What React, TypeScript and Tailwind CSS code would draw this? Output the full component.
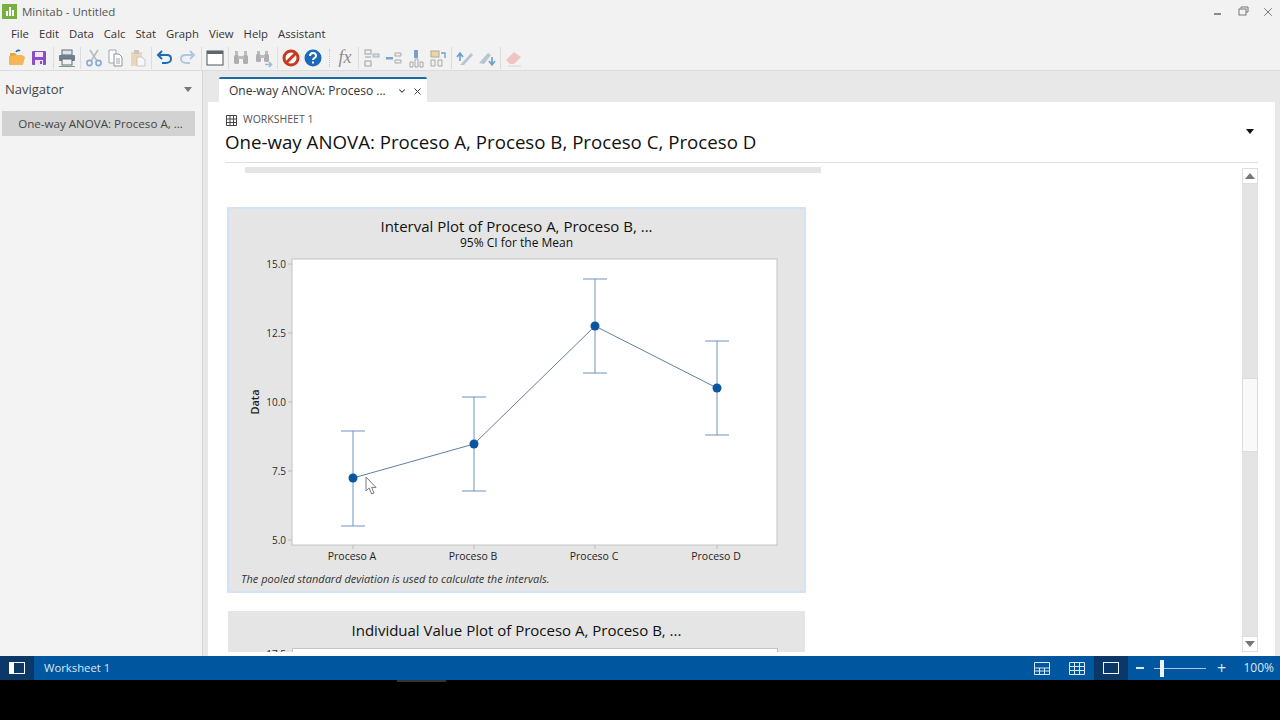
import { ChevronDown, X } from "lucide-react";

const sans = "font-['Open_Sans','Noto_Sans',sans-serif]";

const Sep = ({ tight = false }: { tight?: boolean }) => (
  <div className={`w-px h-[22px] bg-[#dcdcdc] ${tight ? "mx-[1.5px]" : "mx-[2px]"}`} />
);

const Slot = ({ children, className = "" }: { children: React.ReactNode; className?: string }) => (
  <div className={`w-[22px] h-[22px] flex items-center justify-center ${className}`}>
    <svg width="20" height="20" viewBox="0 0 20 20" fill="none">{children}</svg>
  </div>
);

const menus = ["File", "Edit", "Data", "Calc", "Stat", "Graph", "View", "Help", "Assistant"];

const Toolbar = () => (
  <div className="h-[26px] flex items-center pl-[6px]">
    <Slot>
      <path d="M3 5h5l2 2h5v2H3z" fill="#e8a33d" />
      <path d="M2 17V8h4l1-1h8l3 2-2 8z" fill="#f3b755" />
      <path d="M9 4c1-2 3-2 4-1" stroke="#1f6fb5" strokeWidth="1.6" />
    </Slot>
    <Slot>
      <rect x="3" y="3" width="14" height="14" rx="1" fill="#8a4fc0" />
      <rect x="6" y="4" width="8" height="5" fill="#efe7f7" />
      <rect x="6" y="12" width="8" height="5" fill="#efe7f7" />
      <rect x="11" y="13" width="2" height="3" fill="#8a4fc0" />
    </Slot>
    <div className="w-px" />
    <Sep />
    <Slot>
      <rect x="5" y="2" width="10" height="5" fill="#dfe5ea" stroke="#5d6d7a" />
      <rect x="2" y="7" width="16" height="6" rx="1" fill="#6d8090" />
      <rect x="5" y="11" width="10" height="6" fill="#f2f2f2" stroke="#5d6d7a" />
      <path d="M2 18.5h16" stroke="#7c9a8c" />
    </Slot>
    <Sep />
    <Slot className="opacity-60">
      <path d="M6 2l7 11M14 2L7 13" stroke="#8a98a6" strokeWidth="1.5" />
      <circle cx="5.5" cy="15" r="2.6" stroke="#3f7fc0" strokeWidth="1.6" />
      <circle cx="14.5" cy="15" r="2.6" stroke="#3f7fc0" strokeWidth="1.6" />
    </Slot>
    <Slot className="opacity-70">
      <path d="M3 2h7v13H3z" fill="#fff" stroke="#7c8a96" />
      <path d="M8 6h5l3 3v9H8z" fill="#fff" stroke="#66727d" />
      <path d="M10 11h4M10 13h4M10 15h4" stroke="#7c8a96" />
    </Slot>
    <Slot className="opacity-50">
      <rect x="3" y="4" width="11" height="14" fill="#e3bd7e" />
      <rect x="6" y="2" width="5" height="4" fill="#9a9a9a" />
      <path d="M9 9h5l3 3v6H9z" fill="#fff" stroke="#9a9a9a" />
    </Slot>
    <Sep />
    <Slot>
      <path d="M7 3L3 7l4 4" stroke="#1b6cb8" strokeWidth="2" />
      <path d="M3 7h9c3 0 4 2 4 4s-2 4-5 4H7" stroke="#1b6cb8" strokeWidth="2" />
    </Slot>
    <Slot className="opacity-50">
      <path d="M13 3l4 4-4 4" stroke="#6a9fd0" strokeWidth="2" />
      <path d="M17 7H8c-3 0-4 2-4 4s2 4 5 4h4" stroke="#6a9fd0" strokeWidth="2" />
    </Slot>
    <div className="w-px" />
    <Sep />
    <Slot>
      <rect x="2" y="3" width="16" height="14" fill="#fff" stroke="#4d5661" />
      <rect x="2" y="3" width="16" height="3" fill="#5c6672" />
    </Slot>
    <Sep tight />
    <Slot className="opacity-50">
      <rect x="3" y="7" width="5" height="9" rx="1.500" fill="#6c6c6c" />
      <rect x="12" y="7" width="5" height="9" rx="1.500" fill="#6c6c6c" />
      <rect x="7" y="8" width="6" height="3" fill="#8a8a8a" />
      <rect x="4" y="3" width="3" height="4" fill="#8a8a8a" />
      <rect x="13" y="3" width="3" height="4" fill="#8a8a8a" />
    </Slot>
    <div className="w-px" />
    <Slot className="opacity-50">
      <rect x="2" y="6" width="5" height="8" rx="1.500" fill="#6c6c6c" />
      <rect x="10" y="6" width="5" height="8" rx="1.500" fill="#6c6c6c" />
      <rect x="6" y="7" width="5" height="3" fill="#8a8a8a" />
      <rect x="3" y="3" width="3" height="3" fill="#8a8a8a" />
      <rect x="11" y="3" width="3" height="3" fill="#8a8a8a" />
      <path d="M11 16.500h6M15 14l2.500 2.500-2.500 2.500" stroke="#3f86c9" strokeWidth="1.6" />
    </Slot>
    <Sep />
    <Slot>
      <circle cx="10" cy="10" r="7" stroke="#c8391f" strokeWidth="3" fill="#fff" />
      <path d="M5.5 14.5l9-9" stroke="#c8391f" strokeWidth="3" />
    </Slot>
    <Slot>
      <circle cx="10" cy="10" r="8.5" fill="#1c69b8" />
      <path d="M7 8c0-4 6-4 6 0 0 2-3 2-3 4" stroke="#fff" strokeWidth="2" />
      <rect x="9" y="13.5" width="2" height="2" fill="#fff" />
    </Slot>
    <div className="w-[10px] flex justify-center">
      <div className="h-[18px] border-l border-dotted border-[#c4c4c4]" />
    </div>
    <div className="w-[22px] h-[22px] flex items-center justify-center text-[#8d8d8d] italic text-[18px] font-['Liberation_Serif',serif]">
      fx
    </div>
    <Sep />
    <Slot className="opacity-60">
      <rect x="3" y="2" width="6" height="4" stroke="#6d6d6d" />
      <rect x="3" y="13" width="6" height="5" stroke="#6d6d6d" />
      <path d="M3 9h6" stroke="#6d6d6d" />
      <rect x="11" y="6" width="6" height="3" fill="#b9cfe3" stroke="#7b8e9f" />
    </Slot>
    <Slot className="opacity-70">
      <rect x="2" y="9" width="7" height="2.5" fill="#3f86c9" />
      <path d="M11 5h6v3h-6zM11 12h6v3h-6z" stroke="#8a8a8a" />
    </Slot>
    <Slot className="opacity-70">
      <rect x="8" y="2" width="4" height="8" fill="#3f7fc0" />
      <path d="M4 14h3v5H4zM9 11h3v8H9zM14 14h3v5h-3z" stroke="#8a8a8a" />
    </Slot>
    <Slot className="opacity-70">
      <rect x="3" y="3" width="8" height="6" fill="#e6c98a" stroke="#9a8a66" />
      <path d="M3 12h4v6H3zM10 12h4v6h-4z" stroke="#8a8a8a" />
      <path d="M13 5h4v5" stroke="#3f7fc0" strokeWidth="1.4" />
    </Slot>
    <Sep />
    <Slot className="opacity-70">
      <path d="M6 16l10-11 2 2-9 10H5z" fill="#9fb2c4" />
      <path d="M2 9l3-4 3 4M5 5v8" stroke="#2f7cc0" strokeWidth="1.6" />
    </Slot>
    <Slot className="opacity-70">
      <path d="M2 15l9-10 3 2-7 9z" fill="#9fb2c4" />
      <path d="M12 13l3 4 3-4M15 17V9" stroke="#2f7cc0" strokeWidth="1.6" />
    </Slot>
    <Sep />
    <Slot className="opacity-60">
      <path d="M2 12l8-8 7 5-7 7H6z" fill="#f0a7a7" />
      <path d="M4 18h13" stroke="#c9c9c9" />
    </Slot>
  </div>
);

const IntervalPlot = () => {
  const points = [
    { x: 353, y: 478, top: 431, bottom: 526, label: "Proceso A" },
    { x: 474, y: 444, top: 397, bottom: 491, label: "Proceso B" },
    { x: 595, y: 326, top: 279, bottom: 373, label: "Proceso C" },
    { x: 717, y: 388, top: 341, bottom: 435, label: "Proceso D" },
  ];
  const ticks = [
    { y: 264, label: "15.0" },
    { y: 333, label: "12.5" },
    { y: 402, label: "10.0" },
    { y: 471, label: "7.5" },
    { y: 540, label: "5.0" },
  ];
  return (
    <svg viewBox="229 251 575 318" width="575" height="318" className="block">
      <rect x="292" y="259" width="485" height="286" fill="#fff" stroke="#c4c4c4" />
      {ticks.map((t) => (
        <g key={t.label}>
          <line x1="288" x2="292" y1={t.y} y2={t.y} stroke="#bdbdbd" />
          <text x="286" y={t.y + 4} textAnchor="end" fontSize="10" fill="#2b2b2b" fontFamily="Open Sans">
            {t.label}
          </text>
        </g>
      ))}
      <text
        transform="translate(259 402) rotate(-90)"
        textAnchor="middle"
        fontSize="11"
        fill="#1f1f1f"
        fontFamily="Open Sans"
        fontWeight="600"
      >
        Data
      </text>
      {points.map((p) => (
        <g key={p.label}>
          <line x1={p.x} x2={p.x} y1="545" y2="549" stroke="#bdbdbd" />
          <line x1={p.x} x2={p.x} y1={p.top} y2={p.bottom} stroke="#6f93c2" />
          <line x1={p.x - 12} x2={p.x + 12} y1={p.top} y2={p.top} stroke="#6f93c2" />
          <line x1={p.x - 12} x2={p.x + 12} y1={p.bottom} y2={p.bottom} stroke="#6f93c2" />
          <text x={p.x - 1} y="560" textAnchor="middle" fontSize="10.5" fill="#1f1f1f" fontFamily="Open Sans">
            {p.label}
          </text>
        </g>
      ))}
      <polyline
        points={points.map((p) => `${p.x},${p.y}`).join(" ")}
        fill="none"
        stroke="#5f7fa8"
        strokeWidth="1"
      />
      {points.map((p) => (
        <circle key={p.label} cx={p.x} cy={p.y} r="4.5" fill="#0a54a0" />
      ))}
      {/* mouse cursor */}
      <path
        d="M366 477v14l3.200-3 2.400 6 2.400-1-2.400-5.600h4.400z"
        fill="#fff"
        stroke="#7a7a7a"
        strokeWidth="1"
      />
    </svg>
  );
};

const OutputArea = () => (
  <div className="h-[489px] shrink-0 overflow-hidden flex">
    <div className="w-[1017px] flex flex-col">
      <div className="ml-[20px] mt-[4px] w-[576px] h-[6px] shrink-0 bg-[#e4e4e4]" />
      <div className="ml-[2px] mt-[34px] w-[579px] h-[386px] shrink-0 bg-[#e5e5e5] border-2 border-[#d3e3f5] flex flex-col">
        <div className="h-[9px] shrink-0" />
        <div className={`text-center text-[15px] leading-[17px] text-[#111] ${sans}`}>
          Interval Plot of Proceso A, Proceso B, ...
        </div>
        <div className={`text-center text-[12px] leading-[16px] text-[#111] ${sans}`}>95% CI for the Mean</div>
        <IntervalPlot />
        <div className={`pl-[12px] mt-[2px] italic text-[11px] leading-[16px] text-[#333] ${sans}`}>
          The pooled standard deviation is used to calculate the intervals.
        </div>
      </div>
      <div className="ml-[3px] mt-[18px] w-[577px] h-[60px] shrink-0 bg-[#e5e5e5] flex flex-col">
        <div className={`text-center text-[15px] leading-[20px] text-[#111] mt-[9px] ${sans}`}>
          Individual Value Plot of Proceso A, Proceso B, ...
        </div>
        <div className="flex mt-[8px]">
          <div className={`w-[58px] pt-[1px] text-right text-[10px] leading-[10px] text-[#2b2b2b] ${sans}`}>17.5</div>
          <div className="ml-[6px] w-[486px] h-[20px] bg-white border border-[#c4c4c4]" />
        </div>
      </div>
    </div>
    <div className="w-[16px] mt-[5px] h-[484px] bg-[#e4e4e4] flex flex-col justify-between relative">
      <div className="h-[16px] bg-white border border-[#dedede] flex items-center justify-center">
        <div className="w-0 h-0 border-x-[5px] border-x-transparent border-b-[6px] border-b-[#777]" />
      </div>
      <div className="absolute top-[210px] left-0 w-[16px] h-[74px] bg-[#f9f9f9] border border-[#dcdcdc]" />
      <div className="h-[16px] bg-white border border-[#dedede] flex items-center justify-center">
        <div className="w-0 h-0 border-x-[5px] border-x-transparent border-t-[6px] border-t-[#777]" />
      </div>
    </div>
  </div>
);

export default function App() {
  return (
    <div className={`w-[1280px] h-[720px] overflow-hidden bg-black flex flex-col ${sans}`}>
      {/* Title + menu + toolbar */}
      <div className="h-[71px] shrink-0 bg-[#f2f2f2] border-b border-[#dcdcdc] flex flex-col">
        <div className="h-[23px] shrink-0 flex items-center">
          <div className="ml-[2px] w-[15px] h-[15px] bg-[#76b041] flex items-end justify-center gap-px pb-[3px]">
            <div className="w-[2px] h-[5px] bg-white" />
            <div className="w-[2px] h-[9px] bg-white" />
            <div className="w-[2px] h-[6px] bg-white" />
          </div>
          <span className="ml-[5px] text-[11.5px] text-[#555]">Minitab - Untitled</span>
          <div className="ml-auto flex items-center text-[#666]">
            <svg width="10" height="10" viewBox="0 0 10 10" className="mr-[15px]">
              <path d="M1 7h7" stroke="#666" strokeWidth="1.5" />
            </svg>
            <svg width="11" height="11" viewBox="0 0 11 11" fill="none" className="mr-[12px]">
              <path d="M3 2.500V1h7v5H8" stroke="#777" />
              <rect x="1" y="3" width="7" height="6" stroke="#777" />
            </svg>
            <X className="w-[14px] h-[14px] mr-[5px]" strokeWidth={1.5} />
          </div>
        </div>
        <div className="h-[22px] shrink-0 flex items-center pl-[11px] gap-[10px] text-[11.3px] text-[#333]">
          {menus.map((m) => (
            <span key={m}>{m}</span>
          ))}
        </div>
        <Toolbar />
      </div>

      {/* Body */}
      <div className="h-[585px] shrink-0 flex">
        <div className="w-[203px] shrink-0 bg-[#f3f3f3] border-r border-[#d4d4d4] flex flex-col">
          <div className="h-[37px] flex items-center justify-between pl-[5px] pr-[10px]">
            <span className="text-[13px] text-[#444]">Navigator</span>
            <div className="w-0 h-0 border-x-[4px] border-x-transparent border-t-[5px] border-t-[#777]" />
          </div>
          <div className="ml-[2px] mt-[3px] w-[193px] h-[25px] bg-[#d2d2d2] flex items-center justify-center pl-[4px] text-[11.6px] text-[#444]">
            One-way ANOVA: Proceso A, ...
          </div>
        </div>
        <div className="flex-1 bg-[#e8e8e8] pl-[5px] pr-[5px] flex flex-col">
          <div className="h-[31px] pt-[6px] pl-[11px] shrink-0">
            <div className="w-[208px] h-[25px] bg-white border-t-2 border-[#1b6aa8] rounded-t-[2px] flex items-center pl-[10px] pt-[1px] text-[12px] text-[#333]">
              <span>One-way ANOVA: Proceso ...</span>
              <ChevronDown className="w-[10px] h-[10px] ml-[11px]" strokeWidth={2.5} />
              <X className="w-[11px] h-[11px] ml-[5px]" strokeWidth={2} />
            </div>
          </div>
          <div className="flex-1 bg-white pl-[17px] flex flex-col">
            <div className="h-[61px] w-[1033px] shrink-0 border-b border-[#e0e0e0] flex flex-col relative">
              <div className="flex items-center mt-[11px] h-[14px]">
                <svg width="11" height="11" viewBox="0 0 11 11" fill="none" className="ml-px">
                  <path d="M.5.5h10v10H.5zM.5 4h10M.5 7.500h10M4 .5v10M7.500.5v10" stroke="#444" />
                </svg>
                <span className="ml-[6px] text-[10.5px] text-[#555]">WORKSHEET 1</span>
              </div>
              <div className="text-[18.7px] leading-[24px] mt-[3px] text-[#111] whitespace-nowrap">
                One-way ANOVA: Proceso A, Proceso B, Proceso C, Proceso D
              </div>
              <div className="absolute right-[4px] top-[27px] w-0 h-0 border-x-[4px] border-x-transparent border-t-[5px] border-t-[#111]" />
            </div>
            <OutputArea />
            <div className="flex-1" />
          </div>
        </div>
      </div>

      {/* Status bar */}
      <div className="h-[24px] shrink-0 bg-[#01579f] flex items-center text-white">
        <div className="w-[34px] h-full bg-[#0b3866] flex items-center justify-center">
          <div className="w-[16px] h-[12px] bg-white pl-[5px] pt-[1px] pr-[1px] pb-[1px]">
            <div className="w-full h-full bg-[#0b3866]" />
          </div>
        </div>
        <span className="ml-[10px] text-[11.3px] text-[#dbe8f5]">Worksheet 1</span>
        <div className="ml-auto flex items-center h-full">
          <svg width="16" height="13" viewBox="0 0 16 13" fill="none" className="mr-[19px]">
            <path d="M.5.5h15v12H.5zM.5 6h15M.5 9h15M5.500 6v6.500M10.500 6v6.500" stroke="#dbe8f5" />
          </svg>
          <svg width="16" height="13" viewBox="0 0 16 13" fill="none" className="mr-[9px]">
            <path d="M.5.5h15v12H.5zM.5 4.500h15M.5 8.500h15M5.500.5v12M10.500.5v12" stroke="#dbe8f5" />
          </svg>
          <div className="w-[34px] h-full bg-[#0b3866] flex items-center justify-center">
            <div className="w-[16px] h-[12px] border-[1.5px] border-[#eef4fb]" />
          </div>
          <div className="ml-[8px] w-[8px] h-[2px] bg-[#dbe8f5]" />
          <div className="ml-[10px] w-[52px] h-px bg-[#a9c6e2] relative">
            <div className="absolute left-[6px] -top-[8px] w-[4px] h-[17px] bg-[#eef4fb]" />
          </div>
          <span className="ml-[10px] w-[10px] text-center text-[16px] leading-none text-[#dbe8f5]">+</span>
          <span className="ml-[17px] mr-[6px] text-[12px] text-[#dbe8f5]">100%</span>
        </div>
      </div>

      {/* Black strip below the window */}
      <div className="flex-1 bg-black pl-[397px]">
        <div className="w-[49px] h-[2px] bg-[#333]" />
      </div>
    </div>
  );
}
